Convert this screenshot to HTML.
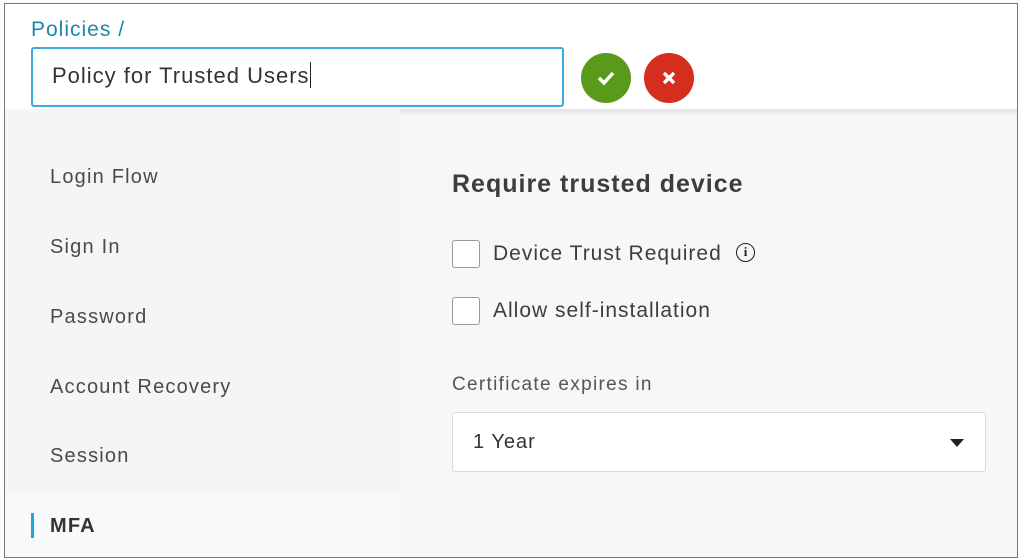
<!DOCTYPE html>
<html><head><style>
*{margin:0;padding:0;box-sizing:border-box}
body{width:1024px;height:559px;background:#fff;font-family:"Liberation Sans",sans-serif;position:relative;overflow:hidden}
.frame{position:absolute;left:4px;top:3px;width:1014px;height:555px;border:1px solid #777;overflow:hidden;background:#fff}
.abs{position:absolute;letter-spacing:1px}
.side{left:0;top:105px;width:395px;height:460px;background:#f3f5f7}
.main{left:395px;top:105px;width:620px;height:460px;background:#f5f7f9;box-shadow:inset 0 8px 8px -6px rgba(0,0,0,.12)}
.nav{left:45px;font-size:20px;color:#4a4a4a;letter-spacing:1.2px}
.cb{width:28px;height:28px;border:1px solid #999;border-radius:3px;background:#fff}
</style></head><body>
<div class="frame">
<div class="abs" style="left:26px;top:14px;font-size:21px;color:#1a87b0">Policies /</div>
<div class="abs" style="left:26px;top:43px;width:533px;height:60px;border:2px solid #3aa9dc;border-radius:3px;background:#fff"></div>
<div class="abs" style="left:47px;top:58px;font-size:22px;color:#333">Policy for Trusted Users<span style="display:inline-block;width:1px;height:26px;background:#222;vertical-align:-5px"></span></div>
<div class="abs" style="left:576px;top:49px;width:50px;height:50px;border-radius:50%;background:#5a9a1a"></div>
<svg class="abs" style="left:592px;top:66px" width="18" height="16" viewBox="0 0 18 16"><path d="M2 8l5 5 9-10" stroke="#fff" stroke-width="3.5" fill="none"/></svg>
<div class="abs" style="left:639px;top:49px;width:50px;height:50px;border-radius:50%;background:#d42e1e"></div>
<svg class="abs" style="left:657px;top:67px" width="14" height="14" viewBox="0 0 14 14"><path d="M2 2l10 10M12 2L2 12" stroke="#fff" stroke-width="3.5"/></svg>
<div class="abs side"></div>
<div class="abs" style="left:0;top:487px;width:395px;height:80px;background:#f7f9fa"></div>
<div class="abs main"></div>
<div class="abs nav" style="top:162px">Login Flow</div>
<div class="abs nav" style="top:232px">Sign In</div>
<div class="abs nav" style="top:302px">Password</div>
<div class="abs nav" style="top:372px">Account Recovery</div>
<div class="abs nav" style="top:441px">Session</div>
<div class="abs" style="left:26px;top:509px;width:3px;height:25px;background:#1ea5e0"></div>
<div class="abs nav" style="top:511px;font-weight:bold;color:#333">MFA</div>
<div class="abs" style="left:447px;top:166px;font-size:25px;font-weight:bold;color:#3d3d3d">Require trusted device</div>
<div class="abs cb" style="left:447px;top:236px"></div>
<div class="abs" style="left:488px;top:238px;font-size:21px;color:#3d3d3d">Device Trust Required</div>
<div class="abs" style="left:731px;top:239px;width:19px;height:19px;border:1.5px solid #222;border-radius:50%;font:bold 13px 'Liberation Serif',serif;text-align:center;line-height:16px;color:#222;letter-spacing:0">i</div>
<div class="abs cb" style="left:447px;top:293px"></div>
<div class="abs" style="left:488px;top:295px;font-size:21px;color:#3d3d3d">Allow self-installation</div>
<div class="abs" style="left:447px;top:370px;font-size:19px;color:#555;letter-spacing:1.3px">Certificate expires in</div>
<div class="abs" style="left:447px;top:408px;width:534px;height:60px;background:#fff;border:1px solid #d8dadc;border-radius:3px"></div>
<div class="abs" style="left:468px;top:427px;font-size:20px;color:#333">1 Year</div>
<svg class="abs" style="left:945px;top:435px" width="14" height="9"><path d="M0 0h14L7 8z" fill="#222"/></svg>
</div>
</body></html>
